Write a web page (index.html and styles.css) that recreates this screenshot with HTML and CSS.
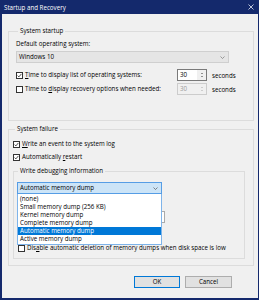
FILE: index.html
```html
<!DOCTYPE html>
<html lang="en">
<head>
  <meta charset="UTF-8"/>
  <title>Startup and Recovery</title>
  <link rel="stylesheet" href="styles.css">
</head>
<body>
  <div class="window">
    <!-- TITLE BAR -->
    <div class="titlebar">
      <span class="title">Startup and Recovery</span>
      <svg class="close" width="6" height="6" viewBox="0 0 6 6"><path d="M0.5 0.5 L5.5 5.5 M5.5 0.5 L0.5 5.5" stroke="#e8ecf5" stroke-width="0.8" fill="none"/></svg>
    </div>

    <div class="client">
      <!-- SYSTEM STARTUP -->
      <fieldset class="group startup">
        <legend>System startup</legend>
        <div class="field-label">Default operating system:</div>
        <div class="combo os">
          <span>Windows 10</span>
          <svg class="chev" width="5" height="3" viewBox="0 0 5 3"><path d="M0.5 0.5 L2.5 2.5 L4.5 0.5" stroke="#777" stroke-width="0.7" fill="none"/></svg>
        </div>
        <div class="timer-row">
          <label class="check"><span class="box checked"><svg width="5" height="5" viewBox="0 0 5 5"><path d="M0.6 2.6 L1.9 3.9 L4.4 0.9" stroke="#222" stroke-width="0.8" fill="none"/></svg></span><span><u>T</u>ime to display list of operating systems:</span></label>
          <div class="spin">
            <span class="spin-val">30</span>
            <span class="spin-btns"><i class="up"></i><i class="down"></i></span>
          </div>
          <span class="unit">seconds</span>
        </div>
        <div class="timer-row">
          <label class="check"><span class="box"></span><span>Time to <u>d</u>isplay recovery options when needed:</span></label>
          <div class="spin disabled">
            <span class="spin-val">30</span>
            <span class="spin-btns"><i class="up"></i><i class="down"></i></span>
          </div>
          <span class="unit">seconds</span>
        </div>
      </fieldset>

      <!-- SYSTEM FAILURE -->
      <fieldset class="group failure">
        <legend>System failure</legend>
        <label class="check row"><span class="box checked"><svg width="5" height="5" viewBox="0 0 5 5"><path d="M0.6 2.6 L1.9 3.9 L4.4 0.9" stroke="#222" stroke-width="0.8" fill="none"/></svg></span><span><u>W</u>rite an event to the system log</span></label>
        <label class="check row"><span class="box checked"><svg width="5" height="5" viewBox="0 0 5 5"><path d="M0.6 2.6 L1.9 3.9 L4.4 0.9" stroke="#222" stroke-width="0.8" fill="none"/></svg></span><span>Automatically <u>r</u>estart</span></label>

        <fieldset class="group debug">
          <legend>Write debugging information</legend>
          <div class="dropdown">
            <div class="combo open">
              <span>Automatic memory dump</span>
              <svg class="chev" width="5" height="3" viewBox="0 0 5 3"><path d="M0.5 0.5 L2.5 2.5 L4.5 0.5" stroke="#555" stroke-width="0.7" fill="none"/></svg>
            </div>
            <ul class="list">
              <li>(none)</li>
              <li>Small memory dump (256 KB)</li>
              <li>Kernel memory dump</li>
              <li>Complete memory dump</li>
              <li class="sel">Automatic memory dump</li>
              <li>Active memory dump</li>
            </ul>
          </div>
          <!-- dump file box, mostly covered by the open list -->
          <div class="edit"></div>
          <label class="check row last"><span class="box"></span><span>Dis<u>a</u>ble automatic deletion of memory dumps when disk space is low</span></label>
        </fieldset>
      </fieldset>

      <!-- BUTTONS -->
      <div class="buttons">
        <button class="btn default">OK</button>
        <button class="btn">Cancel</button>
      </div>
    </div>
  </div>
</body>
</html>
```

FILE: styles.css
```css
body {
  margin: 0;
  width: 259px;
  height: 300px;
  overflow: hidden;
  font-family: "Open Sans", "Noto Sans", sans-serif;
  font-size: 6.2px;
  color: #000;
  background: #14296c;
}
.window {
  height: 300px;
  box-sizing: border-box;
  border: 2px solid #14296c;
  border-top: 0;
  border-right-width: 1px;
  display: flex;
  flex-direction: column;
}
/* TITLE BAR */
.titlebar {
  height: 14px;
  flex: none;
  display: flex;
  align-items: center;
  justify-content: space-between;
  padding: 0 4px 0 2px;
  color: #fff;
}
.close {
  display: block;
}
.client {
  flex: 1;
  background: #f0f0f0;
  padding: 13px 4px 0 6px;
}
/* GROUPS */
.group {
  margin: 0;
  padding: 0 7px 0 7px;
  border: 1px solid #dcdcdc;
  min-inline-size: 0;
}
.group legend {
  margin-left: 2px;
  padding: 0 2px;
  line-height: 8px;
}
.startup {
  padding-bottom: 25px;
}
.failure {
  margin-top: 4px;
  padding: 0 8px 6px 4px;
}
.debug {
  margin-top: 6px;
  padding: 0 4px 6px 3px;
}
.debug legend {
  margin-left: 1px;
}
.field-label {
  margin-top: 5px;
  line-height: 8px;
}
/* COMBO BOXES */
.combo {
  height: 12px;
  box-sizing: border-box;
  border: 1px solid #cfcfcf;
  background: #e5e5e5;
  display: flex;
  align-items: center;
  justify-content: space-between;
  padding: 0 3px 0 2px;
  line-height: 8px;
}
.chev {
  display: block;
}
.os {
  margin-top: 3px;
  width: 213px;
}
.open {
  background: #cce4f7;
  border-color: #569de5;
  width: 145px;
}
.dropdown {
  position: relative;
  margin-top: 7px;
}
.list {
  position: absolute;
  z-index: 2;
  top: 12px;
  left: 0;
  width: 145px;
  box-sizing: border-box;
  margin: 0;
  padding: 1px 0 0;
  list-style: none;
  background: #fff;
  border: 1px solid #7eb4ea;
  border-top: 0;
  height: 51px;
}
.list li {
  height: 8px;
  line-height: 8px;
  padding-left: 2px;
}
.list .sel {
  background: #0078d7;
  color: #fff;
}
.edit {
  margin-top: 17px;
  width: 148px;
  height: 12px;
  box-sizing: border-box;
  border: 1px solid #aaa;
  background: #fff;
}
/* CHECKBOXES */
.check {
  display: flex;
  align-items: center;
  gap: 2px;
  line-height: 8px;
  white-space: nowrap;
}
.check u {
  text-decoration-thickness: 0.5px;
  text-underline-offset: 1px;
}
.box {
  width: 7px;
  height: 7px;
  box-sizing: border-box;
  border: 1px solid #333;
  background: #fff;
  flex: none;
  display: flex;
  align-items: center;
  justify-content: center;
}
.box svg {
  display: block;
}
.failure > .row {
  margin-top: 7px;
}
.failure > .row + .row {
  margin-top: 5px;
}
.last {
  margin-top: 21px;
  padding-left: 1px;
}
/* TIMER ROWS */
.timer-row {
  display: grid;
  grid-template-columns: 156px 30px auto;
  align-items: center;
  column-gap: 5px;
  margin-top: 6px;
}
.timer-row + .timer-row {
  margin-top: 2px;
}
.timer-row .check {
  margin-right: -5px;
}
.spin {
  height: 12px;
  box-sizing: border-box;
  border: 1px solid #7a7a7a;
  background: #fff;
  display: flex;
}
.spin-val {
  flex: 1;
  line-height: 10px;
  padding-left: 2px;
}
.spin-btns {
  width: 9px;
  display: flex;
  flex-direction: column;
  align-items: center;
  justify-content: center;
  gap: 2px;
  background: #f0f0f0;
}
.spin-btns i {
  width: 0;
  height: 0;
  border-left: 1.5px solid transparent;
  border-right: 1.5px solid transparent;
}
.spin-btns .up {
  border-bottom: 1.5px solid #333;
}
.spin-btns .down {
  border-top: 1.5px solid #333;
}
.spin.disabled {
  border-color: #cccccc;
  background: #f0f0f0;
  color: #9a9a9a;
}
.spin.disabled .spin-btns .up {
  border-bottom-color: #aaa;
}
.spin.disabled .spin-btns .down {
  border-top-color: #aaa;
}
/* BUTTONS */
.buttons {
  display: flex;
  justify-content: flex-end;
  gap: 5px;
  padding: 10px 22px 0 0;
}
.btn {
  width: 47px;
  height: 12px;
  box-sizing: border-box;
  border: 1px solid #adadad;
  background: #e1e1e1;
  font-family: inherit;
  font-size: 6.2px;
  padding: 0;
  line-height: 10px;
  color: #000;
}
.btn.default {
  width: 46px;
  border-color: #0078d7;
}
```
